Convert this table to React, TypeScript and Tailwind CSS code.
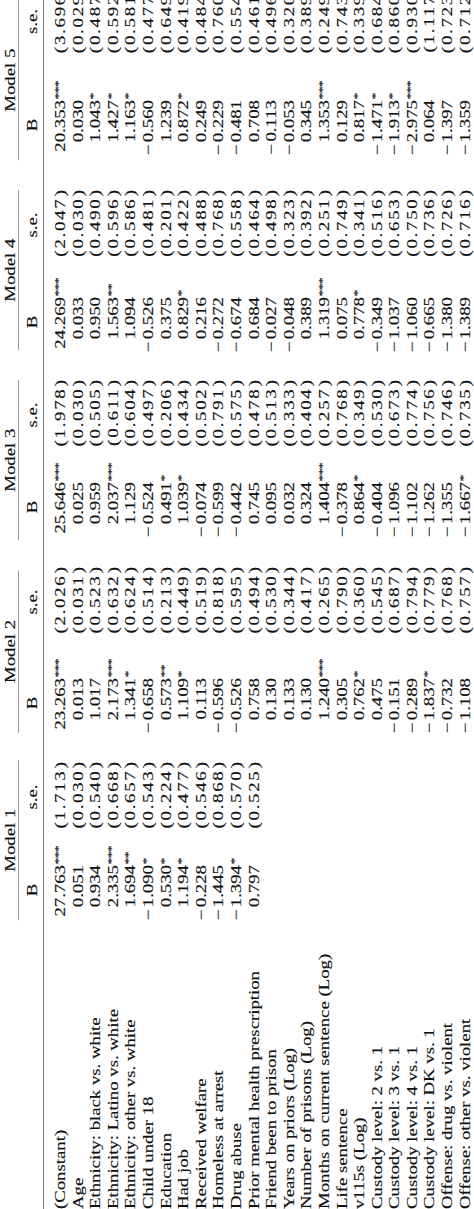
const labels = [
  "(Constant)",
  "Age",
  "Ethnicity: black vs. white",
  "Ethnicity: Latino vs. white",
  "Ethnicity: other vs. white",
  "Child under 18",
  "Education",
  "Had job",
  "Received welfare",
  "Homeless at arrest",
  "Drug abuse",
  "Prior mental health prescription",
  "Friend been to prison",
  "Years on priors (Log)",
  "Number of prisons (Log)",
  "Months on current sentence (Log)",
  "Life sentence",
  "v115s (Log)",
  "Custody level: 2 vs. 1",
  "Custody level: 3 vs. 1",
  "Custody level: 4 vs. 1",
  "Custody level: DK vs. 1",
  "Offense: drug vs. violent",
  "Offense: other vs. violent",
];

type Model = { b: string[]; se: string[] };

const models: Model[] = [
  {
    b: ["27.763***", "0.051", "0.934", "2.335***", "1.694**", "−1.090*", "0.530*", "1.194*", "−0.228", "−1.445", "−1.394*", "0.797"],
    se: ["1.713", "0.030", "0.540", "0.668", "0.657", "0.543", "0.224", "0.477", "0.546", "0.868", "0.570", "0.525"],
  },
  {
    b: ["23.263***", "0.013", "1.017", "2.173***", "1.341*", "−0.658", "0.573**", "1.109*", "0.113", "−0.596", "−0.526", "0.758", "0.130", "0.133", "0.130", "1.240***", "0.305", "0.762*", "0.475", "−0.151", "−0.289", "−1.837*", "−0.732", "−1.108"],
    se: ["2.026", "0.031", "0.523", "0.632", "0.624", "0.514", "0.213", "0.449", "0.519", "0.818", "0.595", "0.494", "0.530", "0.344", "0.417", "0.265", "0.790", "0.360", "0.545", "0.687", "0.794", "0.779", "0.768", "0.757"],
  },
  {
    b: ["25.646***", "0.025", "0.959", "2.037***", "1.129", "−0.524", "0.491*", "1.039*", "−0.074", "−0.599", "−0.442", "0.745", "0.095", "0.032", "0.324", "1.404***", "−0.378", "0.864*", "−0.404", "−1.096", "−1.102", "−1.262", "−1.355", "−1.667*"],
    se: ["1.978", "0.030", "0.505", "0.611", "0.604", "0.497", "0.206", "0.434", "0.502", "0.791", "0.575", "0.478", "0.513", "0.333", "0.404", "0.257", "0.768", "0.349", "0.530", "0.673", "0.774", "0.756", "0.746", "0.735"],
  },
  {
    b: ["24.269***", "0.033", "0.950", "1.563**", "1.094", "−0.526", "0.375", "0.829*", "0.216", "−0.272", "−0.674", "0.684", "−0.027", "−0.048", "0.389", "1.319***", "0.075", "0.778*", "−0.349", "−1.037", "−1.060", "−0.665", "−1.380", "−1.389"],
    se: ["2.047", "0.030", "0.490", "0.596", "0.586", "0.481", "0.201", "0.422", "0.488", "0.768", "0.558", "0.464", "0.498", "0.323", "0.392", "0.251", "0.749", "0.341", "0.516", "0.653", "0.750", "0.736", "0.726", "0.716"],
  },
  {
    b: ["20.353***", "0.030", "1.043*", "1.427*", "1.163*", "−0.560", "1.239", "0.872*", "0.249", "−0.229", "−0.481", "0.708", "−0.113", "−0.053", "0.345", "1.353***", "0.129", "0.817*", "−1.471*", "−1.913*", "−2.975***", "0.064", "−1.397", "−1.359"],
    se: ["3.696", "0.029", "0.487", "0.592", "0.581", "0.477", "0.649", "0.419", "0.484", "0.760", "0.554", "0.461", "0.496", "0.320", "0.389", "0.249", "0.743", "0.339", "0.684", "0.860", "0.930", "1.117", "0.723", "0.712"],
  },
];

// same track list for header and body rows
const cols =
  "grid grid-cols-[224px_69.2px_64.4px_85.2px_70.8px_86px_63.6px_84.4px_67.6px_90px_72.8px]";

function BCell({ v }: { v?: string }) {
  if (!v) return <div />;
  const m = v.match(/^(−?)([\d.]+)(\**)$/);
  if (!m) return <div />;
  return (
    <div className="flex justify-end">
      {m[1] && <span className="mr-[2px]">−</span>}
      <span>{m[2]}</span>
      <span className="mt-[1px] w-[18px] pl-[0.5px] text-[11px] leading-none tracking-[-0.6px]">{m[3]}</span>
    </div>
  );
}

function SeCell({ v }: { v?: string }) {
  if (!v) return <div />;
  return (
    <div className="flex justify-end">
      <span className="mr-[1.5px]">(</span>
      <span className="tracking-[1.4px]">{v}</span>
      <span className="ml-[1px]">)</span>
    </div>
  );
}

export default function App() {
  return (
    <div className="h-[1209px] w-[474px] overflow-hidden bg-white">
      <div className="h-[474px] w-[980px] origin-top-left pt-[2px] font-['Liberation_Serif',serif] text-[15px] text-[#111] [-webkit-text-stroke:0.15px_#111] [transform:translateY(1209px)_rotate(-90deg)_scaleX(1.25)]">
        <div className="grid grid-cols-[231px_128px_22px_130px_24px_128px_24px_128px_24px_128px] leading-[16px]">
          <div />
          {models.map((_, i) => (
            <>
              {i > 0 && <div key={"g" + i} />}
              <div key={"m" + i} className="border-b border-[#9a9a9a] text-center">
                Model {i + 1}
              </div>
            </>
          ))}
        </div>

        <div className={`${cols} mt-[5px] border-b border-[#7a7a7a] pb-[3px] leading-[16px]`}>
          <div />
          {models.map((_, i) => (
            <>
              <div key={"b" + i} className="flex justify-end">
                <span className="w-[40px] text-center">B</span>
                <span className="w-[18px]" />
              </div>
              <div key={"s" + i} className="flex justify-end">
                <span className="w-[56px] text-center">s.e.</span>
              </div>
            </>
          ))}
        </div>

        <div className="mt-[8px]">
          {labels.map((label, r) => (
            <div key={label} className={`${cols} leading-[17.6px]`}>
              <div className="whitespace-nowrap">{label}</div>
              {models.map((m, i) => (
                <>
                  <BCell key={"b" + i} v={m.b[r]} />
                  <SeCell key={"s" + i} v={m.se[r]} />
                </>
              ))}
            </div>
          ))}
        </div>
      </div>
    </div>
  );
}
